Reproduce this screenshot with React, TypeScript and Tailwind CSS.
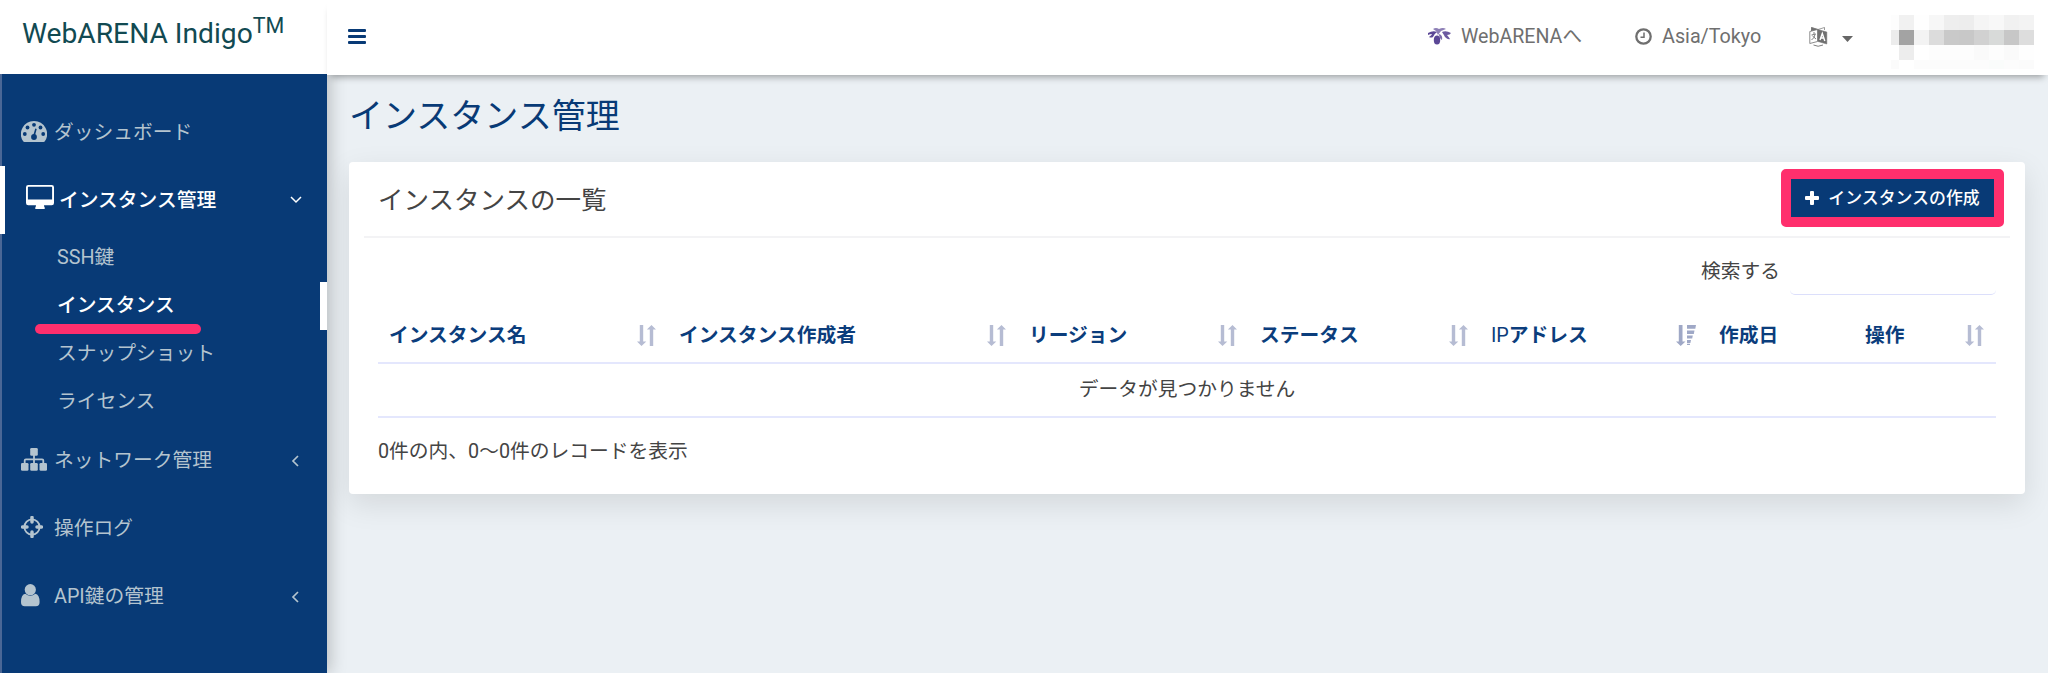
import { ReactNode } from "react";

const subItems = ["SSH鍵", "インスタンス", "スナップショット", "ライセンス"];

const columns = [
    { label: "インスタンス名", width: "w-[290px]", sort: "both" },
    { label: "インスタンス作成者", width: "w-[350px]", sort: "both" },
    { label: "リージョン", width: "w-[231px]", sort: "both" },
    { label: "ステータス", width: "w-[231px]", sort: "both" },
    { label: "IPアドレス", width: "w-[228px]", sort: "desc" },
    { label: "作成日", width: "w-[146px]", sort: "none" },
    { label: "操作", width: "w-[142px]", sort: "both" },
];

// shades of the masked account name, 15px per cell after the first
const mask = [
    ["#fdfdfd", "#f1f1f1", "#fefefe", "#f7f7f7", "#eeeeee", "#ededed", "#f5f5f5", "#f8f8f8", "#f1f1f1", "#f3f3f3"],
    ["#ececec", "#a3a3a3", "#f3f3f3", "#dcdcdc", "#c9c9c9", "#c8c8c8", "#d1d1d1", "#d8dad9", "#c7c7c7", "#dddddd"],
    ["#ffffff", "#ededed", "#ffffff", "#fdfdfd", "#fdfdfd", "#fdfdfd", "#fafafa", "#fdfdfd", "#fafafa", "#fefefe"],
    ["#fbfbfb", "#ffffff", "#fcfcfc", "#fcfcfc", "#fcfcfc", "#fcfcfc", "#fcfcfc", "#fafcfb", "#fcfcfc", "#fbfbfb"],
];

function DashboardIcon() {
    return (
        <svg width="26" height="21" viewBox="0 0 26 21">
            <path d="M13 0A13 13 0 0 0 2 20Q2.500 21 3.500 21H22.500Q23.500 21 24 20A13 13 0 0 0 13 0Z" fill="currentColor" />
            <g fill="#083a76">
                <circle cx="13" cy="3.800" r="1.900" />
                <circle cx="6.500" cy="6.500" r="1.900" />
                <circle cx="19.500" cy="6.500" r="1.900" />
                <circle cx="3.800" cy="13" r="1.900" />
                <circle cx="22.200" cy="13" r="1.900" />
                <circle cx="13" cy="16" r="2.900" />
                <path d="M12.300 14L14.300 7.500L15.700 8L14 14.500Z" />
            </g>
        </svg>
    )
}

function DesktopIcon() {
    return (
        <svg width="28" height="24" viewBox="0 0 28 24">
            <path fillRule="evenodd" fill="currentColor" d="M2.300 0H25.700Q28 0 28 2.300V18Q28 20.300 25.700 20.300H18Q18 21.500 18.700 22.500V24H9.300V22.500Q10 21.500 10 20.300H2.300Q0 20.300 0 18V2.300Q0 0 2.300 0ZM2.500 1.700Q1.900 1.700 1.900 2.500V14.500H26.100V2.500Q26.100 1.700 25.500 1.700Z" />
        </svg>
    )
}

function SitemapIcon() {
    return (
        <svg width="26" height="23" viewBox="0 0 26 23" fill="currentColor">
            <rect x="9.200" y="0" width="7.600" height="7.800" rx="1.300" />
            <rect x="0" y="15" width="7.500" height="7.700" rx="1.300" />
            <rect x="9.200" y="15" width="7.600" height="7.700" rx="1.300" />
            <rect x="18.500" y="15" width="7.500" height="7.700" rx="1.300" />
            <path d="M13 6V16M3.700 16V12.500Q3.700 11.300 4.900 11.300H21.100Q22.300 11.300 22.300 12.500V16" fill="none" stroke="currentColor" strokeWidth="1.800" />
        </svg>
    )
}

function CrosshairsIcon() {
    return (
        <svg width="22" height="22" viewBox="0 0 22 22" fill="none" stroke="currentColor">
            <circle cx="11" cy="11" r="7.600" strokeWidth="1.900" />
            <path d="M11 1.500V6M11 16V20.500M1.500 11H6M16 11H20.500" strokeWidth="3.500" strokeLinecap="round" />
        </svg>
    )
}

function UserIcon() {
    return (
        <svg width="19" height="23" viewBox="0 0 19 23" fill="currentColor">
            <circle cx="9.300" cy="5.700" r="5.600" />
            <path d="M4.300 9.700Q0 10.500 0 18Q0 22.300 3.800 22.300H14.800Q18.600 22.300 18.600 18Q18.600 10.500 14.300 9.700Q9.300 14 4.300 9.700Z" />
        </svg>
    )
}

function SortIcon({ type }: { type: string }) {
    if (type === "none") return null
    if (type === "desc") {
        return (
            <svg width="20" height="21" viewBox="0 0 20 21" fill="#9fa8c6">
                <path d="M2.800 0H6.500V16.500H9.500L4.700 21L0 16.500H2.800Z" />
                <path d="M11 0H20L19.300 3.800H11ZM11 5.500H18.500L17.800 9H11ZM11 10.500H16.800L16.200 13.500H11ZM11 15H15L14.400 18H11Z M11 18.800H14V20H11Z" />
            </svg>
        )
    }
    return (
        <svg width="19" height="21" viewBox="0 0 19 21" fill="#b6bcd3">
            <path d="M2.800 0H6.200V16.500H9.300L4.500 21L0 16.500H2.800Z" />
            <path d="M12.800 21H16.200V4.500H19L14.500 0L9.900 4.500H12.800Z" />
        </svg>
    )
}

function MenuItem({ icon, label, arrow }: { icon: ReactNode; label: string; arrow?: boolean }) {
    return (
        <li className="flex h-[68px] items-center pl-[19px] pr-[27px]">
            <span className="mt-[-2px] w-[33px]">{icon}</span>
            <span className="flex-1 pt-px">{label}</span>
            {arrow && (
                <svg className="mt-px" width="9" height="12" viewBox="0 0 9 12" fill="none" stroke="currentColor" strokeWidth="1.700">
                    <path d="M7 1L2 6L7 11" />
                </svg>
            )}
        </li>
    )
}

function Sidebar() {
    return (
        <aside className="relative z-10 w-[327px] shrink-0 shadow-[3px_0_16px_rgba(0,0,0,0.22)]">
            <div className="h-[74px] bg-white pl-[22px] pt-[13px]">
                <h1 className="whitespace-nowrap text-[28.200px] leading-[42px] text-[#124a52]">
                    WebARENA Indigo<sup className="top-[-10px] text-[21.500px] leading-none">TM</sup>
                </h1>
            </div>
            <ul className="h-[599px] border-l-2 border-[#4a6796] bg-[#083a76] pt-[24px] text-[19.750px] text-[#b4c4cf]">
                <MenuItem icon={<DashboardIcon />} label="ダッシュボード" />
                <li className="relative flex h-[68px] items-center pl-[24px] pr-[25px] font-medium text-white">
                    <span className="absolute left-[-2px] top-0 h-[68px] w-[5px] bg-white" />
                    <span className="w-[33px] -translate-y-[3px]"><DesktopIcon /></span>
                    <span className="flex-1 pt-px">インスタンス管理</span>
                    <svg width="12" height="8" viewBox="0 0 12 8" fill="none" stroke="currentColor" strokeWidth="1.500">
                        <path d="M1 1L6 6L11 1" />
                    </svg>
                </li>
                <li>
                    <ul>
                        {subItems.map((item) => (
                            <li
                                key={item}
                                className={item === "インスタンス"
                                    ? "relative flex h-[48px] items-center border-r-[7px] border-white pl-[55px] font-medium text-white"
                                    : "flex h-[48px] items-center pl-[55px]"}
                            >
                                {item}
                                {item === "インスタンス" && (
                                    <span className="absolute left-[33px] top-[42px] h-[10px] w-[166px] rounded-full bg-[#ff2f6d]" />
                                )}
                            </li>
                        ))}
                    </ul>
                </li>
                <MenuItem icon={<SitemapIcon />} label="ネットワーク管理" arrow />
                <MenuItem icon={<CrosshairsIcon />} label="操作ログ" />
                <MenuItem icon={<UserIcon />} label="API鍵の管理" arrow />
            </ul>
        </aside>
    )
}

function Header() {
    return (
        <header className="relative z-20 flex h-[75px] items-center bg-white pl-[21px] text-[19.600px] text-[#6f6f6f] shadow-[0_6px_7px_-4px_rgba(0,0,0,0.35)]">
            <div className="mt-[-2px] flex w-[18px] flex-col gap-[3px]">
                <span className="h-[3px] rounded-[1px] bg-[#083a76]" />
                <span className="h-[3px] rounded-[1px] bg-[#083a76]" />
                <span className="h-[3px] rounded-[1px] bg-[#083a76]" />
            </div>
            <a className="ml-[1062px] mt-[-2px] flex items-center gap-[10px]">
                <svg width="23" height="18" viewBox="0 0 23 18" fill="#5b4796">
                    <ellipse cx="9" cy="13" rx="3.200" ry="4.500" />
                    <path d="M0 6Q5 3 9 5Q6 7 5 10Q3 11 1 10Q4 8 4 7Q2 7 0 8Z" />
                    <path d="M23 6Q18 3 14 5Q16 8 17 10Q20 13 22 12Q20 9 19 8Q22 8 23 6Z" opacity="0.900" />
                    <path d="M5 2Q8 0 11 2Q15 0 18 2L13 4L10 8L8 4Z" opacity="0.700" />
                    <path d="M11 7Q15 8 14 13Q11 11 11 7Z" opacity="0.800" />
                </svg>
                <span className="w-[123px] whitespace-nowrap">WebARENAへ</span>
            </a>
            <a className="ml-[51px] mt-[-2px] flex items-center gap-[10px]">
                <svg width="17" height="17" viewBox="0 0 17 17" fill="none" stroke="currentColor">
                    <circle cx="8.500" cy="8.500" r="7.200" strokeWidth="2.300" />
                    <path d="M9 4.500V9.200H5.500" strokeWidth="1.500" />
                </svg>
                <span className="w-[101px] whitespace-nowrap text-[19.750px]">Asia/Tokyo</span>
            </a>
            <a className="ml-[46px] mt-[-2px] flex items-center gap-[14px]">
                <svg width="19" height="20" viewBox="0 0 19 20" fill="none" stroke="#707070">
                    <path d="M2.500 4V0.500L9 2.500L15.500 0.500V3" strokeWidth="0.700" />
                    <path d="M2.500 4V0.500L9 2.500Z" fill="#707070" strokeWidth="0.500" />
                    <path d="M0.800 4.500L8.500 2.500V14.500L0.800 16.500Z" fill="#ffffff" strokeWidth="0.800" />
                    <path d="M9 2.500L17.800 5V17L9 14.500Z" fill="#707070" strokeWidth="0.500" />
                    <path d="M5 5V7M2.500 8L7 7M6 7.500Q5.500 11 2.500 13M3.500 9L7 12" strokeWidth="0.900" />
                    <path d="M11 13L13.300 6.500L15.800 14M12 11H15" stroke="#ffffff" strokeWidth="1.400" />
                    <path d="M4.500 18Q9 20.500 14 18" strokeWidth="0.900" />
                </svg>
                <svg className="mt-[4px]" width="11" height="6" viewBox="0 0 11 6" fill="#666666"><path d="M0 0H11L5.500 6Z" /></svg>
            </a>
            <div className="ml-[38px] mt-[9px]">
                {mask.map((row, i) => (
                    <div key={i} className={i === 3 ? "flex h-[9px]" : "flex h-[15px]"}>
                        {row.map((color, j) => (
                            <span key={j} className={j === 0 ? "w-[8px]" : "w-[15px]"} style={{ backgroundColor: color }} />
                        ))}
                    </div>
                ))}
            </div>
        </header>
    )
}

function InstanceTable() {
    return (
        <table className="w-[1618px] table-fixed border-collapse">
            <thead>
                <tr className="h-[54px] border-b-2 border-[#e4e7fd] text-[#0b3d7c]">
                    {columns.map((column) => (
                        <th key={column.label} className={`${column.width} p-0 text-left`}>
                            <div className="flex items-center justify-between pl-[11px] pr-[12px] font-bold">
                                <span>
                                    {column.label.startsWith("IP")
                                        ? <><span className="font-normal">IP</span>アドレス</>
                                        : column.label}
                                </span>
                                <SortIcon type={column.sort} />
                            </div>
                        </th>
                    ))}
                </tr>
            </thead>
            <tbody>
                <tr className="h-[54px] border-b-2 border-[#e4e7fd]">
                    <td colSpan={7} className="p-0 text-center">データが見つかりません</td>
                </tr>
            </tbody>
        </table>
    )
}

function App() {
    return (
        <div className="flex h-[673px] w-full overflow-hidden bg-[#ebf0f4] font-[Roboto,'Noto_Sans_CJK_JP',sans-serif] text-[19.750px] text-[#444444]">
            <Sidebar />
            <div className="min-w-0 flex-1">
                <Header />
                <main className="pl-[22px] pr-[23px] pt-[16px]">
                    <h2 className="h-[71px] text-[34px] leading-[50px] text-[#083a76]">インスタンス管理</h2>
                    <section className="h-[332px] rounded-[4px] bg-white px-[15px] shadow-[0_10px_30px_rgba(0,0,0,0.10)]">
                        <div className="flex h-[76px] items-center justify-between border-b-2 border-[#f3f3f5] pl-[14px] pr-[6px]">
                            <h3 className="pt-[2px] text-[25.500px]">インスタンスの一覧</h3>
                            <button className="mt-[-2px] flex h-[58px] w-[223px] items-center justify-center gap-[9px] rounded-[5px] border-10 border-[#ff2f6d] bg-[#083a76] text-[16.900px] font-medium text-white">
                                <svg width="14" height="14" viewBox="0 0 14 14" fill="currentColor">
                                    <path d="M5 1Q5 0 6 0H8Q9 0 9 1V5H13Q14 5 14 6V8Q14 9 13 9H9V13Q9 14 8 14H6Q5 14 5 13V9H1Q0 9 0 8V6Q0 5 1 5H5Z" />
                                </svg>
                                <span className="pt-px">インスタンスの作成</span>
                            </button>
                        </div>
                        <div className="pl-[14px] pr-[14px]">
                            <label className="flex h-[71px] items-center justify-end gap-[10px]">
                                <span className="pb-[3px]">検索する</span>
                                <input className="mb-[14px] mt-[14px] h-[43px] w-[206px] rounded-[5px] border-b-[1.500px] border-[#dcdffb] outline-none" />
                            </label>
                            <InstanceTable />
                            <p className="mt-[19px] leading-[30px]">0件の内、0〜0件のレコードを表示</p>
                        </div>
                    </section>
                </main>
            </div>
        </div>
    )
}

export default App;
